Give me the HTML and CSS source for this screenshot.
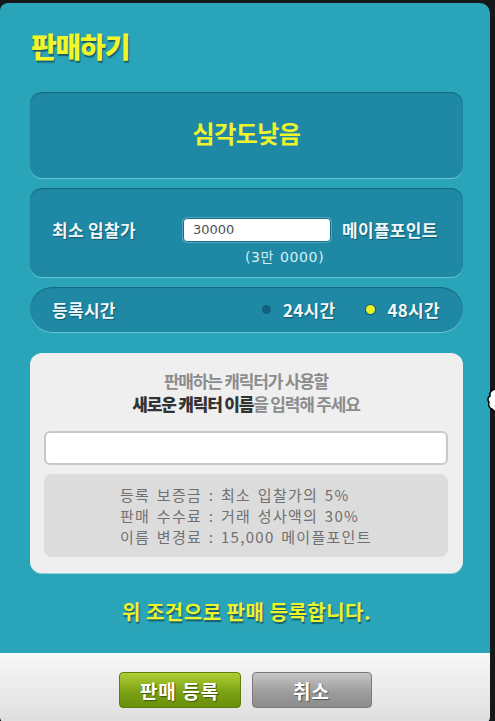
FILE: index.html
```html
<!DOCTYPE html>
<html>
<head>
<title>판매하기</title>
<link rel="stylesheet" href="styles.css">
</head>
<body>

<div class="panel">
  <div class="content">
    <h1>판매하기</h1>

    <div class="box box-grade">심각도낮음</div>

    <div class="box box-price">
      <div class="price-row">
        <span class="label price-label">최소 입찰가</span>
        <input class="price-input" type="text" value="30000">
        <span class="label">메이플포인트</span>
      </div>
      <div class="price-note">(3만 0000)</div>
    </div>

    <div class="box box-time">
      <span class="label">등록시간</span>
      <div class="radios">
        <span class="radio"><i class="dot"></i>24시간</span>
        <span class="radio"><i class="dot on"></i>48시간</span>
      </div>
    </div>

    <div class="card">
      <div class="card-title">
        <div>판매하는 캐릭터가 사용할</div>
        <div><b>새로운 캐릭터 이름</b>을 입력해 주세요</div>
      </div>
      <input class="name-input" type="text">
      <div class="info">
        <div>등록 보증금 : 최소 입찰가의 5%</div>
        <div>판매 수수료 : 거래 성사액의 30%</div>
        <div>이름 변경료 : 15,000 메이플포인트</div>
      </div>
    </div>

    <div class="notice">위 조건으로 판매 등록합니다.</div>
  </div>

  <div class="footer">
    <span class="btn btn-ok">판매 등록</span>
    <span class="btn btn-cancel">취소</span>
  </div>
</div>

<svg class="cursor" width="10" height="26" viewBox="0 0 10 26">
  <path d="M9 1 C5 2 3 5 4 8 C2 9 1 12 3 14 C2 17 3 20 6 21 L9 24" fill="#fff" stroke="#000" stroke-width="1.5"/>
</svg>

</body>
</html>
```

FILE: styles.css
```css
body {
  margin: 0;
  padding-top: 3px;
  background: #151819;
  font-family: "Noto Sans CJK KR", "Noto Sans", sans-serif;
  height: 718px;
  overflow: hidden;
}

.panel {
  width: 490px;
  height: 720px;
  background: #2aa4b8;
  border-radius: 8px 10px 6px 6px;
  overflow: hidden;
  display: flex;
  flex-direction: column;
}

.content {
  padding: 28px 27px 0 30px;
  flex: 1;
}

h1 {
  margin: 0 0 30px 1px;
  font-size: 28px;
  line-height: 31px;
  font-weight: 900;
  color: #f2f52a;
  text-shadow: 1px 2px 1px #16606e;
  letter-spacing: -1.2px;
}

.box {
  background: #1f88a4;
  border-radius: 12px;
  box-shadow: inset 0 1px 1px rgba(0, 40, 60, 0.35), 0 1px 0 rgba(140, 220, 235, 0.6);
  margin-bottom: 10px;
}

.box-grade {
  height: 86px;
  line-height: 82px;
  text-align: center;
  font-size: 24px;
  font-weight: bold;
  color: #eef42c;
  letter-spacing: -0.5px;
}

.box-price {
  height: 89px;
  padding: 29px 22px 0 22px;
  box-sizing: border-box;
}

.price-row {
  display: flex;
  align-items: center;
}

.label {
  font-size: 17px;
  font-weight: bold;
  color: #f2f8fa;
  text-shadow: 1px 1px 1px #145a6c;
  letter-spacing: 0.3px;
}

.price-label {
  width: 131px;
}

.price-input {
  width: 148px;
  height: 24px;
  box-sizing: border-box;
  border: 1px solid #1a6f88;
  border-radius: 4px;
  padding: 0 9px;
  font-family: "DejaVu Sans", sans-serif;
  font-size: 13px;
  color: #505050;
  margin-right: 11px;
  box-shadow: 0 0 0 1px rgba(130, 200, 215, 0.5);
}

.price-note {
  margin: 4px 0 0 193px;
  font-family: "DejaVu Sans", "Noto Sans CJK KR", sans-serif;
  font-size: 14px;
  color: #d6eff5;
  letter-spacing: 0.6px;
  word-spacing: 1px;
}

.box-time {
  height: 45px;
  border-radius: 23px;
  display: flex;
  align-items: center;
  justify-content: space-between;
  padding: 0 23px 0 22px;
  box-sizing: border-box;
  margin-bottom: 21px;
}

.radios {
  display: flex;
  gap: 31px;
}

.radio {
  display: flex;
  align-items: center;
  font-size: 17px;
  font-weight: bold;
  color: #f2f8fa;
  text-shadow: 1px 1px 1px #145a6c;
  letter-spacing: 0.3px;
}

.dot {
  width: 9px;
  height: 9px;
  border-radius: 50%;
  background: #125f80;
  margin-right: 12px;
}

.dot.on {
  background: #e8f222;
  box-shadow: 0 0 0 1px #14607a;
}

.card {
  background: #efefef;
  border-radius: 12px;
  height: 220px;
  box-sizing: border-box;
  padding: 16px 15px 0 14px;
  box-shadow: 0 1px 0 rgba(255, 255, 255, 0.5);
}

.card-title {
  text-align: center;
  font-size: 17px;
  line-height: 23px;
  font-weight: bold;
  color: #8c8c8c;
  letter-spacing: -1.2px;
}

.card-title b {
  color: #333;
}

.name-input {
  display: block;
  width: 100%;
  height: 34px;
  box-sizing: border-box;
  margin-top: 16px;
  border: 2px solid #c8c8c8;
  border-radius: 6px;
  background: #fff;
}

.info {
  margin-top: 9px;
  background: #dcdcdc;
  border-radius: 8px;
  height: 83px;
  box-sizing: border-box;
  padding: 10px 0 0 76px;
  font-size: 15px;
  line-height: 21px;
  color: #707070;
  letter-spacing: 1.3px;
  word-spacing: 2px;
}

.notice {
  margin-top: 24px;
  text-align: center;
  font-size: 20px;
  font-weight: bold;
  color: #eef42c;
  text-shadow: 1px 2px 1px #16606e;
  letter-spacing: 0.5px;
}

.footer {
  height: 70px;
  background: linear-gradient(#f7f7f7, #dedede);
  border-top: 1px solid #fafafa;
  display: flex;
  justify-content: center;
  gap: 11px;
  padding-top: 18px;
  box-sizing: border-box;
}

.btn {
  height: 36px;
  box-sizing: border-box;
  border-radius: 4px;
  display: flex;
  align-items: center;
  justify-content: center;
  font-size: 19px;
  font-weight: bold;
  color: #fff;
  letter-spacing: 1px;
}

.btn-ok {
  width: 122px;
  background: linear-gradient(#b0cf36, #7ca214 55%, #6a8f0c);
  border: 1px solid #5d7e0c;
  text-shadow: 1px 1px 1px #3c5606;
}

.btn-cancel {
  width: 120px;
  background: linear-gradient(#c6c6c6, #9d9d9d 55%, #8c8c8c);
  border: 1px solid #7a7a7a;
  text-shadow: 1px 1px 1px #555;
}

.cursor {
  position: absolute;
  left: 486px;
  top: 388px;
}
```
